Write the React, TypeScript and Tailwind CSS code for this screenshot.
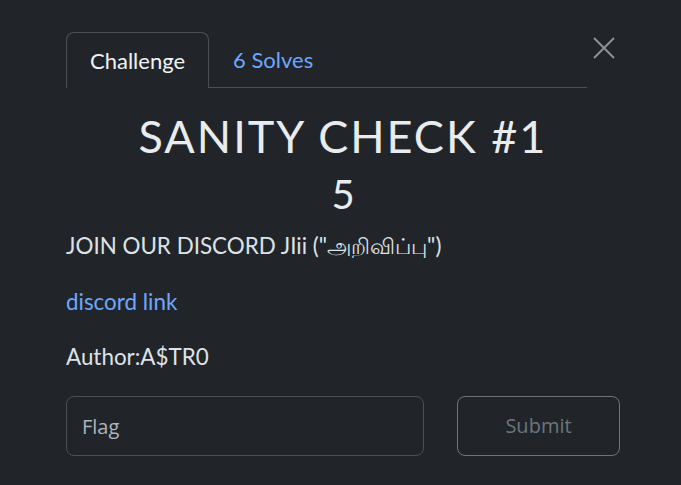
export default function App() {
  return (
    <div className="w-full h-[485px] overflow-hidden bg-[#212529] text-[#dee2e6] font-['Lato',sans-serif]">
      <div className="pl-[66px] pr-[61px] pt-[32px]">
        <div className="flex items-start">
          <nav className="flex flex-1 border-b border-[#495057]">
            <div className="h-[56px] -mb-px px-[23px] flex items-center rounded-t-lg border border-b-0 border-[#495057] bg-[#212529] text-[22px] text-[#f1f3f5]">
              Challenge
            </div>
            <div className="h-[55px] px-[24px] flex items-center text-[22px] text-[#6ea8fe]">6 Solves</div>
          </nav>
          <button className="w-[33px] h-[33px] -mt-[1px] flex items-center justify-center text-[#8f9194]">
            <svg width="22" height="22" viewBox="0 0 22 22" fill="none" stroke="currentColor" strokeWidth="2">
              <path d="M1 1 L21 21 M21 1 L1 21" />
            </svg>
          </button>
        </div>

        <h2 className="mt-[21px] text-center text-[45px] leading-[54px] tracking-[2px] text-[#e9ecef]">SANITY CHECK #1</h2>
        <h3 className="mt-[7px] text-center text-[40px] leading-[48px] text-[#e9ecef]">5</h3>

        <p className="mt-[11px] text-[22.4px] leading-[34px]">JOIN OUR DISCORD JIii ("அறிவிப்பு")</p>
        <p className="mt-[22px] text-[22.4px] leading-[34px]">
          <a className="text-[#6ea8fe]">discord link</a>
        </p>
        <p className="mt-[21px] text-[22.4px] leading-[34px]">Author:A$TR0</p>

        <div className="mt-[22px] flex gap-[33px] font-['Open_Sans',sans-serif]">
          <input
            placeholder="Flag"
            className="w-[358px] h-[60px] px-[15px] rounded-lg border border-[#495057] bg-[#212529] text-[20px] text-[#dee2e6] placeholder:text-[#adb5bd] outline-none"
          />
          <button className="w-[163px] h-[60px] rounded-lg border border-[#6c757d] text-[20px] text-[#6c757d]">
            Submit
          </button>
        </div>
      </div>
    </div>
  );
}
